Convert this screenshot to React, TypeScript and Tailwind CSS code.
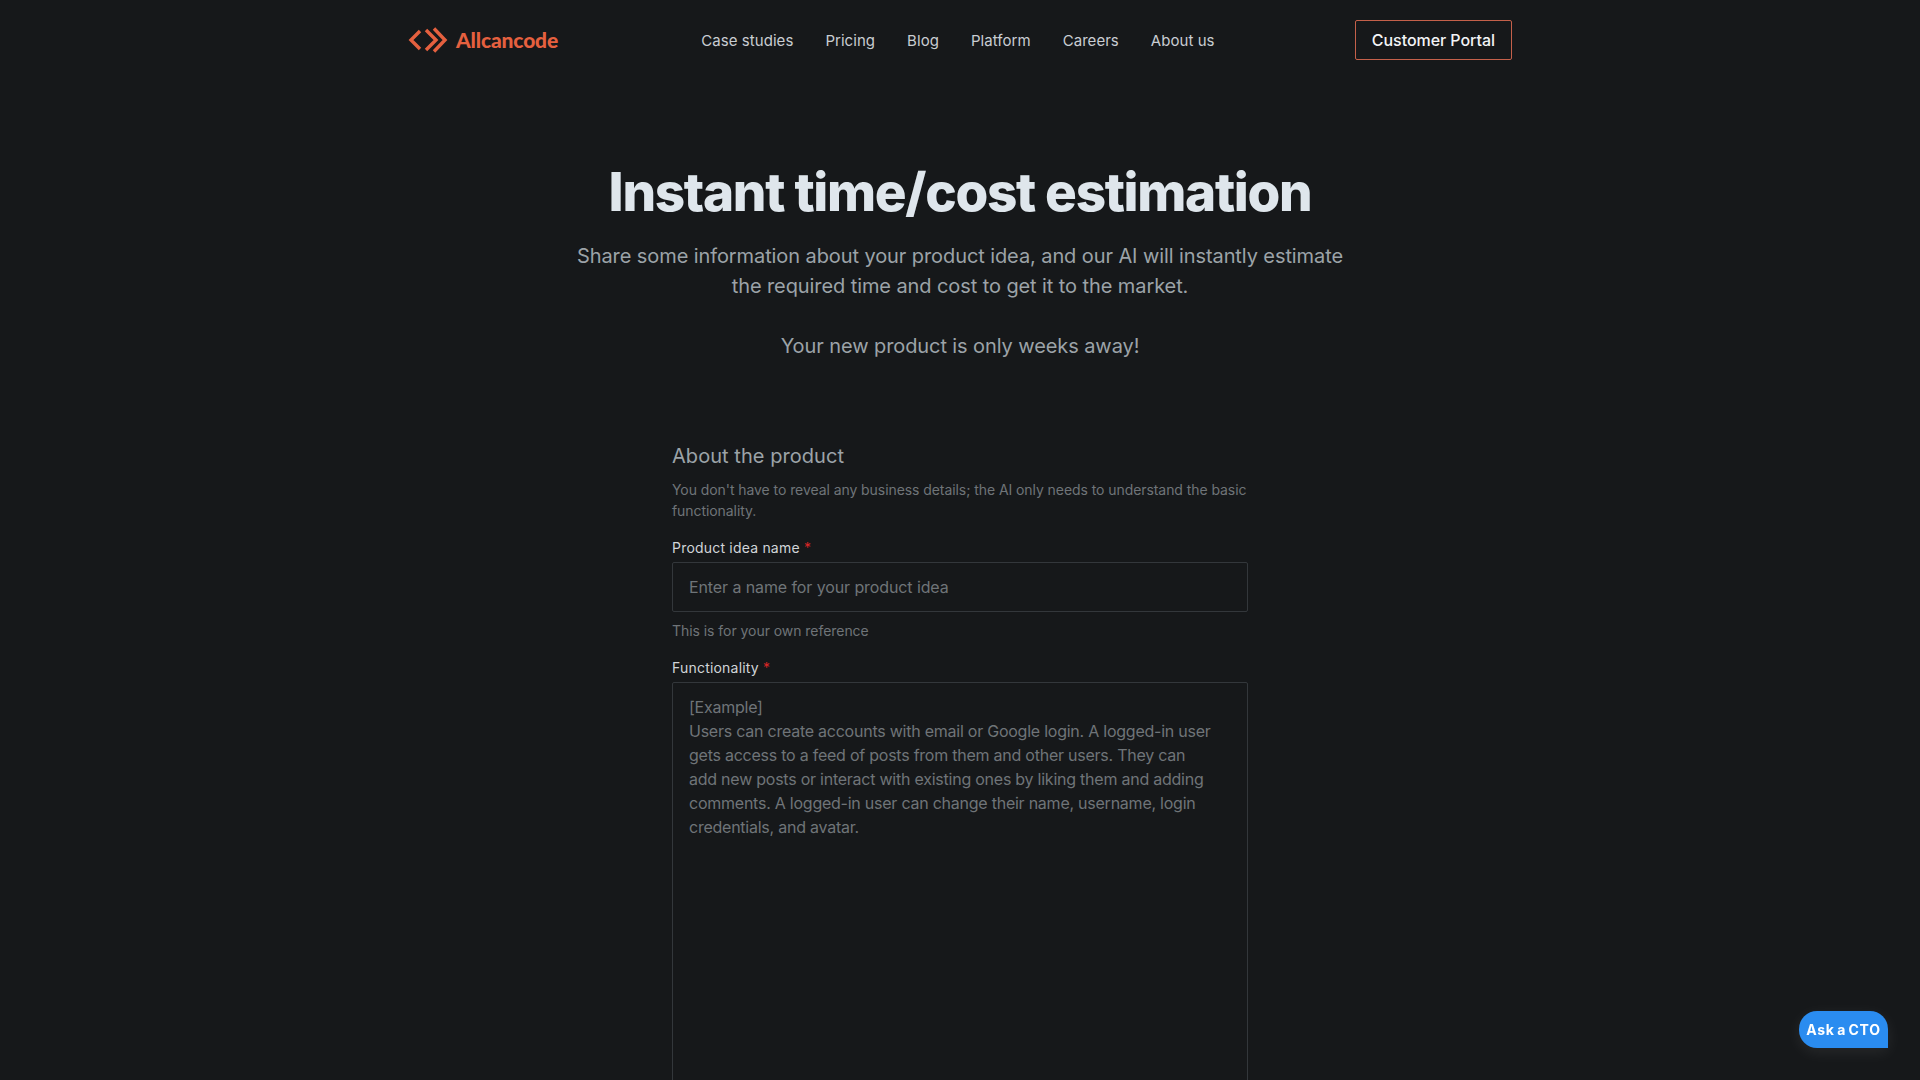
const navLinks = ["Case studies", "Pricing", "Blog", "Platform", "Careers", "About us"]

const exampleText = `[Example]
Users can create accounts with email or Google login. A logged-in user gets access to a feed of posts from them and other users. They can add new posts or interact with existing ones by liking them and adding comments. A logged-in user can change their name, username, login credentials, and avatar.`

function Logo() {
  return (
    <div className="flex items-center gap-2 text-[#e5603f]">
      <svg width="40" height="26" viewBox="0 0 40 26" fill="none" stroke="currentColor" strokeWidth="3.4">
        <path d="M12 4 L3 13 L12 22" />
        <path d="M18 3 L28 13 L18 23" />
        <path d="M26 1.5 L37 13 L26 24.5" />
      </svg>
      <span className="-mt-[2px] font-['Lato',sans-serif] text-[21px] font-black leading-none tracking-[-0.15px]">Allcancode</span>
    </div>
  )
}

function Label({ children }: { children: string }) {
  return (
    <label className="block text-sm leading-[21px] tracking-[0.2px] text-[#d1d5d8]">
      {children} <span className="text-[#dc2626]">*</span>
    </label>
  )
}

export default function App() {
  return (
    <div className="h-screen overflow-hidden bg-[#16181a] font-['Inter',sans-serif]">
      <header className="mx-auto flex h-20 w-[1104px] items-center justify-between">
        <Logo />
        <nav className="ml-[3px] flex items-center gap-8 pt-[2px] text-[15px] tracking-[0.05px] text-[#c9cdd2]">
          {navLinks.map((link) => (
            <a key={link} href="#">
              {link}
            </a>
          ))}
        </nav>
        <a href="#" className="rounded-[2px] border border-[#c4604a] px-4 py-[7px] text-base font-medium tracking-[-0.05px] text-[#f3f4f6]">
          Customer Portal
        </a>
      </header>

      <main className="flex flex-col items-center">
        <h1 className="mt-[78px] text-[53px] font-extrabold leading-[68px] tracking-[-0.025em] text-[#dfe6ec]">
          Instant time/cost estimation
        </h1>
        <p className="mt-[15px] w-[780px] text-center text-xl leading-[30px] tracking-[-0.09px] text-[#9ca3a8]">
          Share some information about your product idea, and our AI will instantly estimate the required time and cost
          to get it to the market.
          <br />
          <br />
          Your new product is only weeks away!
        </p>

        <form className="mt-[80px] w-[576px]">
          <h2 className="text-xl leading-[30px] tracking-[0.05px] text-[#9ca3a8]">About the product</h2>
          <p className="mt-[8px] text-sm leading-[21px] tracking-[-0.07px] text-[#6f7478]">
            You don't have to reveal any business details; the AI only needs to understand the basic functionality.
          </p>
          <div className="mt-[16px]">
            <Label>Product idea name</Label>
            <input
              placeholder="Enter a name for your product idea"
              className="mt-[4px] h-[50px] w-full rounded-[2px] border border-[#33373b] bg-transparent px-4 text-base tracking-[-0.1px] placeholder:text-[#6f7478]"
            />
            <p className="mt-[8px] text-sm leading-[21px] tracking-[-0.05px] text-[#6f7478]">This is for your own reference</p>
          </div>
          <div className="mt-[16px]">
            <Label>Functionality</Label>
            <textarea
              placeholder={exampleText}
              className="mt-[4px] block h-[500px] w-full resize-none rounded-[2px] border border-[#33373b] bg-transparent py-3 pr-[31px] pl-4 text-base leading-6 tracking-[-0.24px] placeholder:text-[#6f7478]"
            />
          </div>
        </form>
      </main>

      <button className="fixed right-8 bottom-8 h-[37px] w-[89px] rounded-t-[18px] rounded-bl-[18px] bg-[#2a8cf0] text-sm font-bold tracking-[0.05em] text-white [word-spacing:-1.5px] shadow-[0_4px_16px_rgba(255,255,255,0.08)]">
        Ask a CTO
      </button>
    </div>
  )
}
